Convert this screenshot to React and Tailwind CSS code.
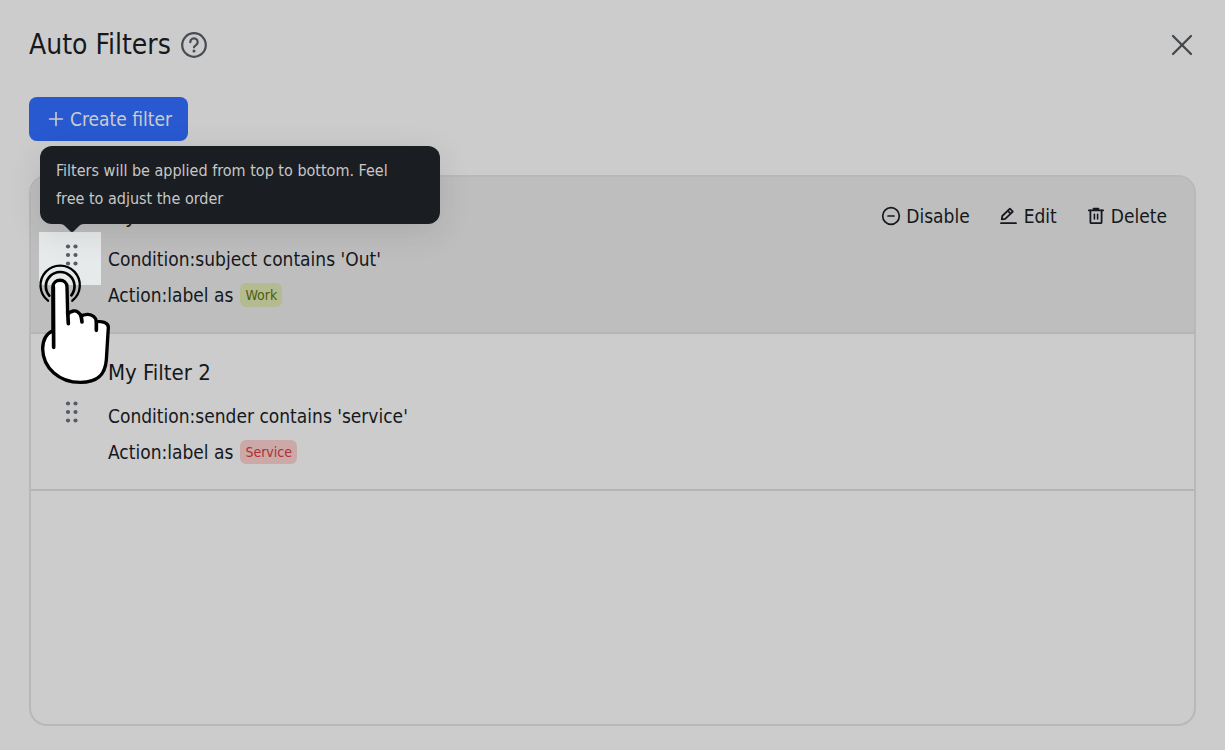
import { Plus, X } from "lucide-react";

const filters = [
  {
    name: "My Filter 1",
    condition: "subject contains 'Out'",
    label: "Work",
    labelStyle: "bg-[#b4bb91] text-[#4c5c0c]",
    active: true,
  },
  {
    name: "My Filter 2",
    condition: "sender contains 'service'",
    label: "Service",
    labelStyle: "bg-[#cca9a9] text-[#ad2f2f]",
    active: false,
  },
];

const HelpIcon = () => (
  <svg width="26" height="26" viewBox="0 0 26 26" fill="none" stroke="#474b54" strokeWidth="2.2" strokeLinecap="round">
    <circle cx="13" cy="13" r="11.8" />
    <path d="M9.3 10.2a3.7 3.7 0 1 1 5.8 2.9c-1.4 1-2.1 1.4-2.1 2.2" />
    <circle cx="13" cy="18.9" r="1.5" fill="#474b54" stroke="none" />
  </svg>
);

const DisableIcon = () => (
  <svg width="20" height="20" viewBox="0 0 20 20" fill="none" stroke="currentColor" strokeWidth="1.7">
    <circle cx="10" cy="10" r="8.3" />
    <path d="M7 10h6" strokeLinecap="round" />
  </svg>
);

const EditIcon = () => (
  <svg width="20" height="20" viewBox="0 0 20 20" fill="none" stroke="currentColor" strokeWidth="1.8" strokeLinejoin="round">
    <path d="M2.8 13.4l.5-3.4 7.6-7.3 2.9 2.9-7.6 7.3z" />
    <path d="M8.8 4.8l2.9 2.9" />
    <path d="M2 17.2h15" strokeLinecap="round" />
  </svg>
);

const DeleteIcon = () => (
  <svg width="20" height="20" viewBox="0 0 20 20" fill="none" stroke="currentColor" strokeWidth="1.8" strokeLinejoin="round" strokeLinecap="round">
    <path d="M2.8 4.3h14.4M7.6 4V2.6h4.8V4" />
    <path d="M4.4 4.3v11.9q0 1 1 1h9.2q1 0 1-1V4.3" />
    <path d="M8.4 8.2v4.8M11.6 8.2v4.8" strokeWidth="1.6" />
  </svg>
);

const GripIcon = () => (
  <svg width="14" height="24" viewBox="0 0 14 24" fill="#565b66">
    <circle cx="3" cy="3.5" r="2.1" />
    <circle cx="10.5" cy="3.5" r="2.1" />
    <circle cx="3" cy="12" r="2.1" />
    <circle cx="10.5" cy="12" r="2.1" />
    <circle cx="3" cy="20.5" r="2.1" />
    <circle cx="10.5" cy="20.5" r="2.1" />
  </svg>
);

const HandPointer = () => (
  <svg width="72" height="120" viewBox="24 129 216 360" fill="none" stroke="#000" strokeLinecap="round" strokeLinejoin="round">
    <path d="M54 239A59 59 0 1 1 127 239" strokeWidth="7" />
    <path d="M58 224A43 43 0 1 1 124 223" strokeWidth="8" />
    <path
      d="M69 329C48 338 38 358 38 384C39 440 87 484 151 484C211 484 226 453 229 417L235 319C235 307 221 301 199 301C199 292 187 279 172 280C162 281 157 283 153 286C150 275 139 268 130 270C121 272 116 276 113 281L111 198C111 171 69 171 69 198Z"
      fill="#fff"
      strokeWidth="10"
    />
    <path d="M70 198L71 379M113 272L115 308M153 282L156 303M199 301V328" strokeWidth="11" />
  </svg>
);

const Tooltip = () => (
  <div
    role="tooltip"
    className="absolute left-[11px] -top-[29px] z-10 w-[400px] rounded-xl bg-[#1a1d21] py-[11px] pl-4 pr-8 text-base leading-7 text-[#c7c7c7] shadow-[0_8px_32px_rgba(31,35,41,0.12)]"
  >
    Filters will be applied from top to bottom. Feel free to adjust the order
    <svg className="absolute left-5 top-full" width="24" height="9" viewBox="0 0 24 9" fill="#1a1d21">
      <path d="M0 0h24c-3 0-4 1-6 3l-4 4q-2 2-4 0L6 3C4 1 3 0 0 0z" />
    </svg>
  </div>
);

const FilterRow = ({ filter }) => {
  return (
    <li
      className={`relative flex border-b-2 border-[#b4b6b6] pr-[27px] pb-[19px] pt-[23px] ${
        filter.active ? "bg-[#bebebe]" : ""
      }`}
    >
      {filter.active && (
        <div className="absolute left-2 top-[55px] h-[53px] w-[62px] bg-[#e7eaea]" />
      )}
      <button
        aria-label="Reorder filter"
        className="relative -mb-[19px] -mt-[23px] flex w-[77px] shrink-0 items-center pl-[34px]"
      >
        <GripIcon />
      </button>
      <div className="flex-1">
        <h2 className="text-[22px] leading-8">{filter.name}</h2>
        <p className="mt-[9px] text-[19px] leading-9">Condition:{filter.condition}</p>
        <p className="flex items-center text-[19px] leading-9">
          Action:label as
          <span className={`ml-[7px] rounded-md px-[5px] text-sm leading-6 ${filter.labelStyle}`}>
            {filter.label}
          </span>
        </p>
      </div>
      {filter.active && (
        <div className="flex h-8 items-center gap-[29px] text-[19px]">
          <button className="flex items-center gap-[5px]">
            <DisableIcon />
            Disable
          </button>
          <button className="flex items-center gap-[5px]">
            <EditIcon />
            Edit
          </button>
          <button className="flex items-center gap-[5px]">
            <DeleteIcon />
            Delete
          </button>
        </div>
      )}
      {filter.active && (
        <div className="pointer-events-none absolute left-[7px] top-[87px] z-20">
          <HandPointer />
        </div>
      )}
    </li>
  );
};

export default function App() {
  return (
    <div className="flex min-h-screen flex-col bg-[#cccccc] px-[29px] pb-6 pt-[25px] font-['DejaVu_Sans_Condensed','DejaVu_Sans',sans-serif] text-[#15181c]">
      <header className="flex items-center justify-between">
        <div className="flex items-center gap-[10px]">
          <h1 className="text-[28px] leading-10">Auto Filters</h1>
          <button aria-label="Help">
            <HelpIcon />
          </button>
        </div>
        <button aria-label="Close" className="-mr-1">
          <X size={36} strokeWidth={1.5} color="#42484d" />
        </button>
      </header>
      <button className="mt-8 flex h-11 items-center gap-[3px] self-start rounded-lg bg-[#2859d0] px-4 text-[19px] text-[#cccccc]">
        <Plus size={22} strokeWidth={1.8} />
        Create filter
      </button>
      <main className="relative mt-[34px] flex flex-1 flex-col">
        <Tooltip />
        <ul className="flex-1 overflow-clip rounded-[18px] border-2 border-[#b7b8b8]">
          {filters.map((filter) => (
            <FilterRow key={filter.name} filter={filter} />
          ))}
        </ul>
      </main>
    </div>
  );
}
